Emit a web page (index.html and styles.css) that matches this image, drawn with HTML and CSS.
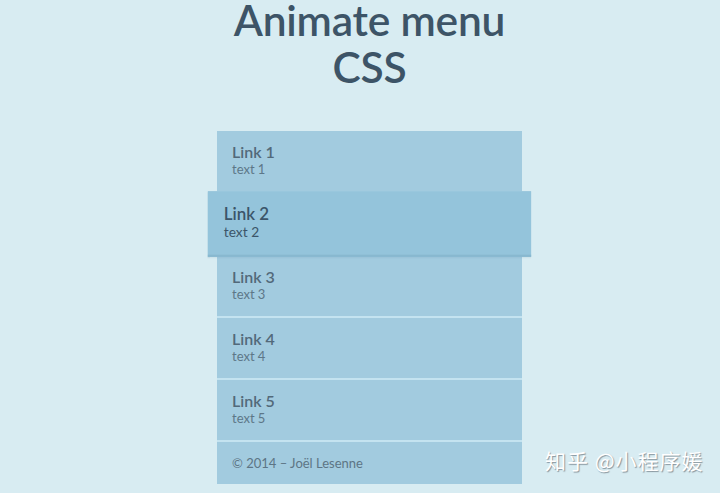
FILE: index.html
```html
<!DOCTYPE html>
<html lang="en">
<head>
<meta charset="utf-8">
<title>Animate menu CSS</title>
<link rel="stylesheet" href="styles.css">
</head>
<body>
<div class="page">
  <h1 class="title">Animate menu<br>CSS</h1>
  <ul class="menu">
    <li class="item"><span class="item-title">Link 1</span><span class="item-text">text 1</span></li>
    <li class="item is-active"><span class="item-title">Link 2</span><span class="item-text">text 2</span></li>
    <li class="item"><span class="item-title">Link 3</span><span class="item-text">text 3</span></li>
    <li class="item"><span class="item-title">Link 4</span><span class="item-text">text 4</span></li>
    <li class="item"><span class="item-title">Link 5</span><span class="item-text">text 5</span></li>
    <li class="footer">© 2014 – Joël Lesenne</li>
  </ul>
</div>
<div class="watermark">知乎 @小程序媛</div>
</body>
</html>
```
FILE: styles.css
```css
html, body {
  margin: 0;
  padding: 0;
  height: 100%;
  overflow: hidden;
}
body {
  background: #d8ecf2;
  font-family: Lato, "Noto Sans", sans-serif;
  color: #4f6b7d;
}
.page {
  padding-left: 19px;
  display: flex;
  flex-direction: column;
  align-items: center;
}
.title {
  margin: -4px 0 0;
  font-size: 42.5px;
  line-height: 47px;
  font-weight: 600;
  text-align: center;
  color: #3d5467;
  letter-spacing: -0.2px;
}
.menu {
  list-style: none;
  margin: 41px 0 0;
  padding: 0;
  width: 305px;
}
.item {
  display: flex;
  flex-direction: column;
  background: #a2cbdf;
  padding: 11px 15px 13px;
  height: 36.25px;
  border-bottom: 2px solid #c4e3f0;
}
.item-title {
  font-size: 16px;
  line-height: 19px;
  font-weight: 600;
  color: #52697a;
}
.item-text {
  font-size: 13px;
  line-height: 16px;
  color: #5d7788;
}
.item.is-active {
  position: relative;
  transform: scale(1.06);
  background: #94c4db;
  border-bottom-color: #88b8cf;
  box-shadow: 0 1px 1px rgba(60, 110, 140, 0.15);
}
.is-active .item-title,
.is-active .item-text {
  color: #3b5569;
}
.footer {
  background: #a2cbdf;
  height: 42px;
  padding: 0 15px;
  display: flex;
  align-items: center;
  font-size: 13px;
  color: #5d7585;
}
.watermark {
  position: absolute;
  left: 545px;
  top: 446px;
  font-family: "Noto Sans CJK SC", "Noto Sans", sans-serif;
  font-size: 21px;
  line-height: 28px;
  color: #ffffff;
  text-shadow: 1px 1px 1px rgba(80, 90, 100, 0.6);
  letter-spacing: 1px;
}
```
